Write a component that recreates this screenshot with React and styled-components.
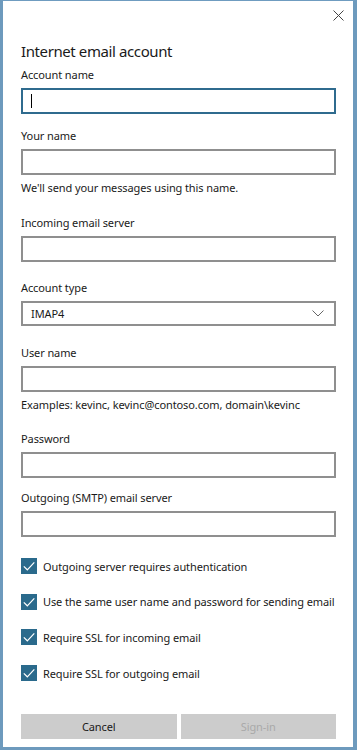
import React from "react";
import styled, { createGlobalStyle } from "styled-components";

const GlobalStyle = createGlobalStyle`
  html, body {
    margin: 0;
    padding: 0;
    background: #5f8db3;
  }
  body {
    font-family: "Noto Sans", "Open Sans", sans-serif;
    color: #1a1a1a;
  }
`;

const Frame = styled.div`
  width: 357px;
  height: 750px;
  box-sizing: border-box;
  border-top: 1px solid #6f9cc0;
  border-left: 3px solid #6d9abd;
  border-right: 4px solid #6d9abd;
  border-bottom: 3px solid #6d9abd;
  background: #ffffff;
  display: flex;
  flex-direction: column;
`;

const TopBar = styled.div`
  height: 28px;
  display: flex;
  justify-content: flex-end;
  align-items: center;
  padding-right: 4px;
`;

const CloseButton = styled.button`
  border: none;
  background: transparent;
  width: 22px;
  height: 22px;
  padding: 0;
  display: flex;
  align-items: center;
  justify-content: center;
`;

const Body = styled.div`
  padding: 0 17px 0 18px;
  display: flex;
  flex-direction: column;
  font-size: 11px;
  letter-spacing: -0.1px;
`;

const Title = styled.h1`
  margin: 11px 0 0;
  font-size: 15px;
  letter-spacing: -0.4px;
  line-height: 22px;
  font-weight: 400;
  color: #1a1a1a;
`;

const Field = styled.div`
  margin-top: ${(p) => p.$space}px;
  display: flex;
  flex-direction: column;
`;

const Label = styled.label`
  line-height: 16px;
  margin-bottom: 5px;
  color: #1a1a1a;
`;

const TextBox = styled.input`
  box-sizing: border-box;
  height: 26px;
  width: 100%;
  margin: 0;
  border: 2px solid #8f8f8f;
  background: #fff;
  padding: 0 8px;
  font-family: inherit;
  font-size: 11px;
  outline: none;
`;

const FocusBox = styled.div`
  box-sizing: border-box;
  height: 26px;
  width: 100%;
  border: 2px solid #2f6b8e;
  padding: 0 8px;
  display: flex;
  align-items: center;
`;

const Caret = styled.span`
  display: inline-block;
  width: 1px;
  height: 14px;
  background: #000;
`;

const SelectBox = styled.div`
  box-sizing: border-box;
  height: 25px;
  width: 100%;
  border: 2px solid #8f8f8f;
  padding: 0 10px 0 8px;
  display: flex;
  align-items: center;
  justify-content: space-between;
  color: #1a1a1a;
`;

const Hint = styled.div`
  margin-top: 5px;
  line-height: 16px;
  color: #1a1a1a;
`;

const Checks = styled.div`
  margin-top: 19px;
  display: flex;
  flex-direction: column;
  gap: 15.7px;
`;

const CheckRow = styled.div`
  height: 20px;
  display: flex;
  align-items: center;
  gap: 6px;
  color: #1a1a1a;
  white-space: nowrap;
`;

const CheckBox = styled.span`
  width: 16px;
  height: 16px;
  flex: none;
  background: #2a6a8c;
  display: flex;
  align-items: center;
  justify-content: center;
`;

const Buttons = styled.div`
  margin-top: 31px;
  display: grid;
  grid-template-columns: 1fr 1fr;
  gap: 4px;
`;

const Button = styled.button`
  height: 25px;
  border: none;
  margin: 0;
  background: #cccccc;
  font-family: inherit;
  font-size: 11px;
  letter-spacing: -0.1px;
  color: ${(p) => (p.$disabled ? "#a9a9a9" : "#1a1a1a")};
`;

const Check = () => (
  <svg width="14" height="14" viewBox="0 0 14 14">
    <path d="M1.8 7.4 L5.3 10.8 L12.3 3.4" fill="none" stroke="#fff" strokeWidth="1.2" />
  </svg>
);

const checks = [
  "Outgoing server requires authentication",
  "Use the same user name and password for sending email",
  "Require SSL for incoming email",
  "Require SSL for outgoing email",
];

export default function App() {
  return (
    <>
      <GlobalStyle />
      <Frame>
        <TopBar>
          <CloseButton aria-label="Close">
            <svg width="11" height="11" viewBox="0 0 11 11">
              <path d="M0.5 0.5 L10.5 10.5 M10.5 0.5 L0.5 10.5" stroke="#444" strokeWidth="1" />
            </svg>
          </CloseButton>
        </TopBar>
        <Body>
          <Title>Internet email account</Title>

          <Field $space={5}>
            <Label>Account name</Label>
            <FocusBox>
              <Caret />
            </FocusBox>
          </Field>

          <Field $space={14}>
            <Label>Your name</Label>
            <TextBox />
            <Hint>We'll send your messages using this name.</Hint>
          </Field>

          <Field $space={19}>
            <Label>Incoming email server</Label>
            <TextBox />
          </Field>

          <Field $space={18}>
            <Label>Account type</Label>
            <SelectBox>
              <span>IMAP4</span>
              <svg width="12" height="7" viewBox="0 0 12 7">
                <path d="M0.5 0.5 L6 6 L11.5 0.5" fill="none" stroke="#666" strokeWidth="1" />
              </svg>
            </SelectBox>
          </Field>

          <Field $space={19}>
            <Label>User name</Label>
            <TextBox />
            <Hint>Examples: kevinc, kevinc@contoso.com, domain\kevinc</Hint>
          </Field>

          <Field $space={18}>
            <Label>Password</Label>
            <TextBox type="password" />
          </Field>

          <Field $space={12}>
            <Label>Outgoing (SMTP) email server</Label>
            <TextBox />
          </Field>

          <Checks>
            {checks.map((c) => (
              <CheckRow key={c}>
                <CheckBox>
                  <Check />
                </CheckBox>
                {c}
              </CheckRow>
            ))}
          </Checks>

          <Buttons>
            <Button>Cancel</Button>
            <Button $disabled>Sign-in</Button>
          </Buttons>
        </Body>
      </Frame>
    </>
  );
}
